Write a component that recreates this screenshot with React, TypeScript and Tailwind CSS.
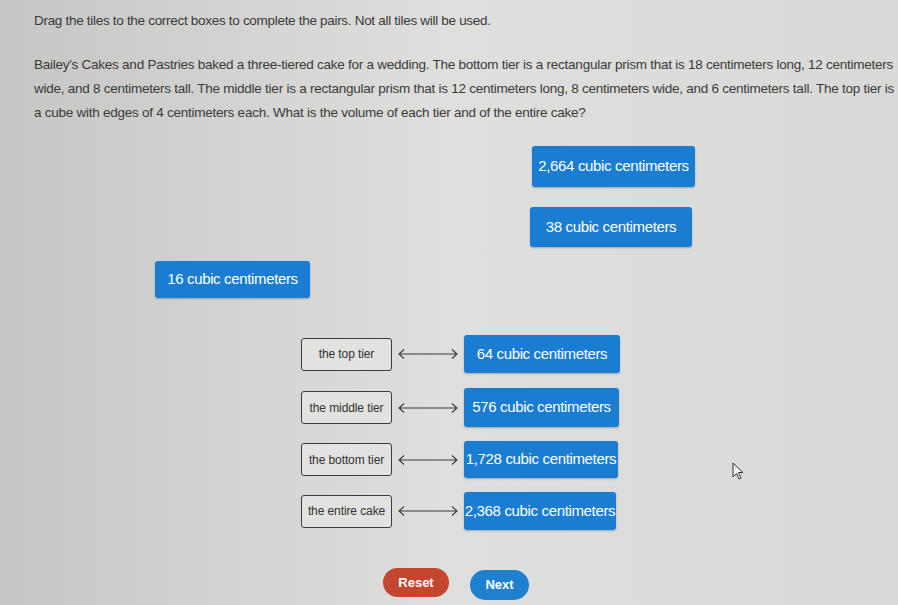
import { ReactNode } from "react";

const Tile = ({ children, className = "" }: { children: ReactNode; className?: string }) => (
  <div
    className={`flex items-center justify-center whitespace-nowrap rounded-[3px] bg-[#1a7dd2] text-[15px] text-white tracking-[-0.35px] shadow-[0_1px_2px_rgba(0,0,0,0.25)] ${className}`}
  >
    {children}
  </div>
);

const Arrow = () => (
  <svg width="62" height="12" viewBox="0 0 62 12" className="shrink-0">
    <path d="M2 6 H60 M7 1.5 L2 6 L7 10.5 M55 1.5 L60 6 L55 10.5" fill="none" stroke="#3a3a3a" strokeWidth="1.1" />
  </svg>
);

const pairs = [
  { label: "the top tier", value: "64 cubic centimeters", mt: "mt-[37px]", rw: "w-[156px]", h: "h-[38px]" },
  { label: "the middle tier", value: "576 cubic centimeters", mt: "mt-[15px]", rw: "w-[155px]", h: "h-[39px]" },
  { label: "the bottom tier", value: "1,728 cubic centimeters", mt: "mt-[14px]", rw: "w-[154px]", h: "h-[37px]" },
  { label: "the entire cake", value: "2,368 cubic centimeters", mt: "mt-[14px]", rw: "w-[152px]", h: "h-[38px]" },
];

export default function App() {
  return (
    <div className="relative h-[605px] w-[898px] overflow-hidden bg-gradient-to-r from-[#c6c6c4] via-[#dfdfdd] to-[#d9d9d7] font-['Liberation_Sans',Arial,sans-serif] text-[#3a3a3a]">
      <div className="pl-[34px] pt-[12px]">
        <p className="whitespace-nowrap text-[13.5px] leading-[18px] tracking-[-0.3px]">
          Drag the tiles to the correct boxes to complete the pairs. Not all tiles will be used.
        </p>
        <div className="mt-[23px] whitespace-nowrap text-[13.5px] leading-[24px] tracking-[-0.25px]">
          <p>
            Bailey's Cakes and Pastries baked a three-tiered cake for a wedding. The bottom tier is a rectangular prism that is 18 centimeters long, 12 centimeters
          </p>
          <p>
            wide, and 8 centimeters tall. The middle tier is a rectangular prism that is 12 centimeters long, 8 centimeters wide, and 6 centimeters tall. The top tier is
          </p>
          <p>a cube with edges of 4 centimeters each. What is the volume of each tier and of the entire cake?</p>
        </div>
      </div>

      <div className="mt-[21px] flex pl-[532px]">
        <Tile className="h-[41px] w-[163px]">2,664 cubic centimeters</Tile>
      </div>
      <div className="mt-[20px] flex pl-[530px]">
        <Tile className="h-[40px] w-[162px]">38 cubic centimeters</Tile>
      </div>
      <div className="mt-[14px] flex pl-[155px]">
        <Tile className="h-[37px] w-[155px]">16 cubic centimeters</Tile>
      </div>

      {pairs.map((p) => (
        <div key={p.label} className={`flex items-center pl-[301px] ${p.mt}`}>
          <div className="flex h-[33px] w-[91px] items-center justify-center whitespace-nowrap rounded-[3px] border-[1.5px] border-[#3c3c3c] bg-[#e2e2e0] text-[12px] tracking-[-0.1px] text-[#333]">
            {p.label}
          </div>
          <div className="ml-[5px] mr-[5px]">
            <Arrow />
          </div>
          <Tile className={`${p.h} ${p.rw}`}>{p.value}</Tile>
        </div>
      ))}

      <div className="mt-[38px] flex items-start gap-[21px] pl-[383px]">
        <button className="h-[29px] w-[66px] rounded-full bg-[#c4462f] text-[13px] font-bold text-white">Reset</button>
        <button className="mt-[2px] h-[30px] w-[59px] rounded-full bg-[#1f80d0] text-[13px] font-bold text-white">Next</button>
      </div>

      <svg className="absolute left-[732px] top-[462px]" width="14" height="20" viewBox="0 0 14 20">
        <path d="M1 1 L1 15 L4.5 11.5 L7 17 L9 16 L6.5 10.5 L11 10.5 Z" fill="#f2f2f0" stroke="#333" strokeWidth="1" />
      </svg>
    </div>
  );
}
